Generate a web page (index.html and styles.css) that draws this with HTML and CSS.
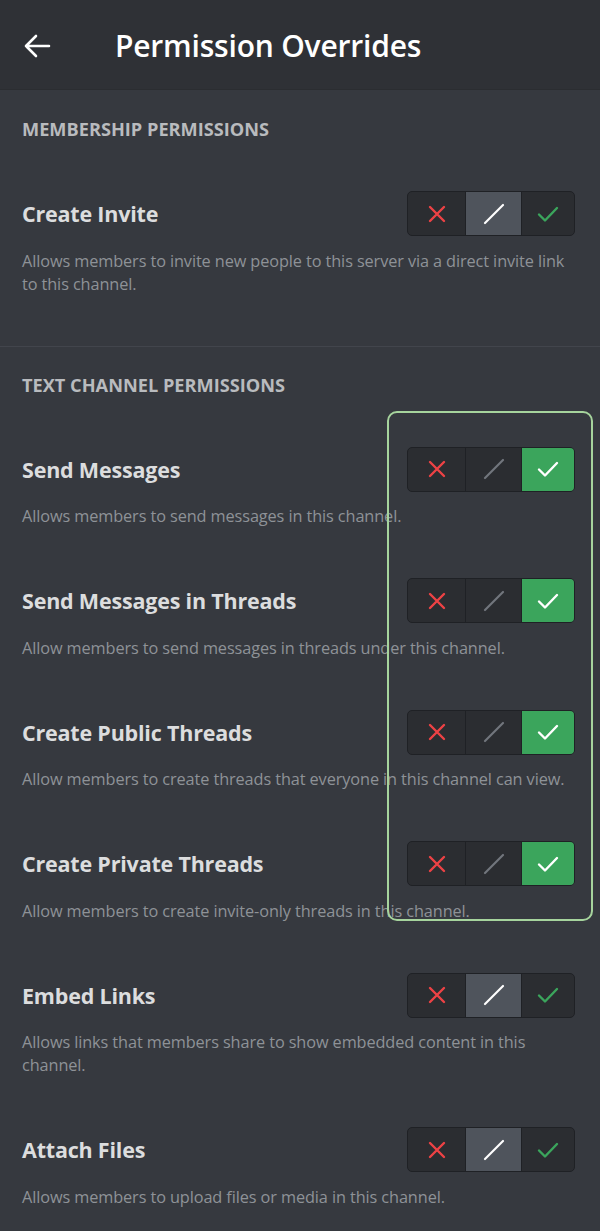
FILE: index.html
```html
<!DOCTYPE html>
<html>
<head>
<meta charset="utf-8">
<link rel="stylesheet" href="styles.css">
</head>
<body>
<div class="screen">
  <header class="topbar">
    <svg class="back" width="28" height="24" viewBox="0 0 28 24"><path d="M26 12H3M13 2L3 12l10 10" fill="none" stroke="#fff" stroke-width="2.6" stroke-linecap="round" stroke-linejoin="round"/></svg>
    <h1 class="title">Permission Overrides</h1>
  </header>

  <section class="section">
    <h2 class="section-title">MEMBERSHIP PERMISSIONS</h2>
    <div class="row">
      <div class="row-top">
        <div class="perm-name">Create Invite</div>
        <div class="toggle"><span class="seg deny"><svg width="18" height="18" viewBox="0 0 18 18"><path d="M2 2L16 16M16 2L2 16" stroke="#ed4245" stroke-width="2.4" stroke-linecap="round"/></svg></span><span class="seg neutral on"><svg width="22" height="22" viewBox="0 0 22 22"><path d="M2 20L20 2" stroke="#fff" stroke-width="2.2" stroke-linecap="round"/></svg></span><span class="seg allow"><svg width="22" height="18" viewBox="0 0 22 18"><path d="M2 9.5L8 15.5L20 3" fill="none" stroke="#3ba55c" stroke-width="2.4" stroke-linecap="round" stroke-linejoin="round"/></svg></span></div>
      </div>
      <p class="desc">Allows members to invite new people to this server via a direct invite link to this channel.</p>
    </div>
  </section>

  <section class="section divided">
    <h2 class="section-title">TEXT CHANNEL PERMISSIONS</h2>
    <div class="row">
      <div class="row-top">
        <div class="perm-name">Send Messages</div>
        <div class="toggle"><span class="seg deny"><svg width="18" height="18" viewBox="0 0 18 18"><path d="M2 2L16 16M16 2L2 16" stroke="#ed4245" stroke-width="2.4" stroke-linecap="round"/></svg></span><span class="seg neutral"><svg width="22" height="22" viewBox="0 0 22 22"><path d="M2 20L20 2" stroke="#72767d" stroke-width="2.2" stroke-linecap="round"/></svg></span><span class="seg allow on"><svg width="22" height="18" viewBox="0 0 22 18"><path d="M2 9.5L8 15.5L20 3" fill="none" stroke="#fff" stroke-width="2.4" stroke-linecap="round" stroke-linejoin="round"/></svg></span></div>
      </div>
      <p class="desc">Allows members to send messages in this channel.</p>
    </div>
    <div class="row">
      <div class="row-top">
        <div class="perm-name">Send Messages in Threads</div>
        <div class="toggle"><span class="seg deny"><svg width="18" height="18" viewBox="0 0 18 18"><path d="M2 2L16 16M16 2L2 16" stroke="#ed4245" stroke-width="2.4" stroke-linecap="round"/></svg></span><span class="seg neutral"><svg width="22" height="22" viewBox="0 0 22 22"><path d="M2 20L20 2" stroke="#72767d" stroke-width="2.2" stroke-linecap="round"/></svg></span><span class="seg allow on"><svg width="22" height="18" viewBox="0 0 22 18"><path d="M2 9.5L8 15.5L20 3" fill="none" stroke="#fff" stroke-width="2.4" stroke-linecap="round" stroke-linejoin="round"/></svg></span></div>
      </div>
      <p class="desc">Allow members to send messages in threads under this channel.</p>
    </div>
    <div class="row">
      <div class="row-top">
        <div class="perm-name">Create Public Threads</div>
        <div class="toggle"><span class="seg deny"><svg width="18" height="18" viewBox="0 0 18 18"><path d="M2 2L16 16M16 2L2 16" stroke="#ed4245" stroke-width="2.4" stroke-linecap="round"/></svg></span><span class="seg neutral"><svg width="22" height="22" viewBox="0 0 22 22"><path d="M2 20L20 2" stroke="#72767d" stroke-width="2.2" stroke-linecap="round"/></svg></span><span class="seg allow on"><svg width="22" height="18" viewBox="0 0 22 18"><path d="M2 9.5L8 15.5L20 3" fill="none" stroke="#fff" stroke-width="2.4" stroke-linecap="round" stroke-linejoin="round"/></svg></span></div>
      </div>
      <p class="desc">Allow members to create threads that everyone in this channel can view.</p>
    </div>
    <div class="row">
      <div class="row-top">
        <div class="perm-name">Create Private Threads</div>
        <div class="toggle"><span class="seg deny"><svg width="18" height="18" viewBox="0 0 18 18"><path d="M2 2L16 16M16 2L2 16" stroke="#ed4245" stroke-width="2.4" stroke-linecap="round"/></svg></span><span class="seg neutral"><svg width="22" height="22" viewBox="0 0 22 22"><path d="M2 20L20 2" stroke="#72767d" stroke-width="2.2" stroke-linecap="round"/></svg></span><span class="seg allow on"><svg width="22" height="18" viewBox="0 0 22 18"><path d="M2 9.5L8 15.5L20 3" fill="none" stroke="#fff" stroke-width="2.4" stroke-linecap="round" stroke-linejoin="round"/></svg></span></div>
      </div>
      <p class="desc">Allow members to create invite-only threads in this channel.</p>
    </div>
    <div class="row">
      <div class="row-top">
        <div class="perm-name">Embed Links</div>
        <div class="toggle"><span class="seg deny"><svg width="18" height="18" viewBox="0 0 18 18"><path d="M2 2L16 16M16 2L2 16" stroke="#ed4245" stroke-width="2.4" stroke-linecap="round"/></svg></span><span class="seg neutral on"><svg width="22" height="22" viewBox="0 0 22 22"><path d="M2 20L20 2" stroke="#fff" stroke-width="2.2" stroke-linecap="round"/></svg></span><span class="seg allow"><svg width="22" height="18" viewBox="0 0 22 18"><path d="M2 9.5L8 15.5L20 3" fill="none" stroke="#3ba55c" stroke-width="2.4" stroke-linecap="round" stroke-linejoin="round"/></svg></span></div>
      </div>
      <p class="desc">Allows links that members share to show embedded content in this channel.</p>
    </div>
    <div class="row">
      <div class="row-top">
        <div class="perm-name">Attach Files</div>
        <div class="toggle"><span class="seg deny"><svg width="18" height="18" viewBox="0 0 18 18"><path d="M2 2L16 16M16 2L2 16" stroke="#ed4245" stroke-width="2.4" stroke-linecap="round"/></svg></span><span class="seg neutral on"><svg width="22" height="22" viewBox="0 0 22 22"><path d="M2 20L20 2" stroke="#fff" stroke-width="2.2" stroke-linecap="round"/></svg></span><span class="seg allow"><svg width="22" height="18" viewBox="0 0 22 18"><path d="M2 9.5L8 15.5L20 3" fill="none" stroke="#3ba55c" stroke-width="2.4" stroke-linecap="round" stroke-linejoin="round"/></svg></span></div>
      </div>
      <p class="desc">Allows members to upload files or media in this channel.</p>
    </div>
  </section>

  <div class="highlight"></div>
</div>
</body>
</html>
```

FILE: styles.css
```css
* { box-sizing: border-box; }
html, body { margin: 0; padding: 0; }
body {
  background: #36393f;
  font-family: "Open Sans", "Noto Sans", sans-serif;
  width: 600px;
  height: 1231px;
  overflow: hidden;
}
.screen {
  position: relative;
  width: 600px;
  min-height: 1231px;
  background: #36393f;
}
.topbar {
  height: 90px;
  background: #2f3136;
  display: flex;
  align-items: center;
  padding-left: 23px;
  border-bottom: 1px solid #2b2d31;
}
.back { display: block; flex: none; margin-top: 2px; }
.title {
  margin: 2px 0 0 64px;
  color: #ffffff;
  font-size: 30px;
  font-weight: 600;
  letter-spacing: -0.2px;
  line-height: 36px;
}
.section {
  padding: 27px 25px 50px 22px;
}
.section.divided {
  border-top: 1px solid #42454c;
  padding-top: 26px;
}
.section-title {
  margin: 0;
  font-size: 18.2px;
  line-height: 24px;
  font-weight: 700;
  color: #b9bbbe;
  letter-spacing: 0;
}
.row {
  padding-top: 50px;
}
.row-top {
  display: flex;
  align-items: center;
  justify-content: space-between;
  height: 45px;
}
.perm-name {
  color: #dcddde;
  font-size: 21.5px;
  font-weight: 700;
  letter-spacing: -0.2px;
}
.toggle {
  display: flex;
  width: 168px;
  height: 45px;
  border: 1px solid #1f2125;
  border-radius: 5px;
  background: #2b2d31;
  overflow: hidden;
}
.seg {
  display: flex;
  align-items: center;
  justify-content: center;
}
.seg.deny { width: 57px; }
.seg.neutral { width: 56px; }
.seg.allow { width: 53px; }
.seg + .seg { border-left: 1px solid #1f2125; }
.seg.neutral.on { background: #4f545c; }
.seg.allow.on { background: #3ba55c; }
.desc {
  margin: 13.5px 0 0;
  font-size: 16.3px;
  line-height: 23px;
  color: #8e9297;
  letter-spacing: -0.1px;
}
.highlight {
  position: absolute;
  left: 387px;
  top: 411px;
  width: 206px;
  height: 510px;
  border: 2px solid #a6d49d;
  border-radius: 10px;
  pointer-events: none;
}
```
